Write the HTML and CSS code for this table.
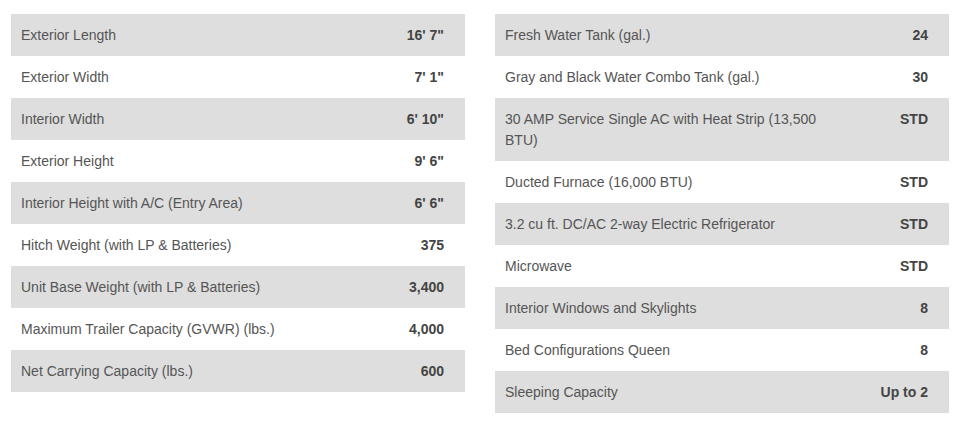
FILE: index.html
```html
<!DOCTYPE html>
<html>
<head>
<meta charset="utf-8">
<link rel="stylesheet" href="styles.css">
</head>
<body>
<div class="wrap">
  <div class="specs">
    <div class="row"><div class="label">Exterior Length</div><div class="value">16' 7"</div></div>
    <div class="row"><div class="label">Exterior Width</div><div class="value">7' 1"</div></div>
    <div class="row"><div class="label">Interior Width</div><div class="value">6' 10"</div></div>
    <div class="row"><div class="label">Exterior Height</div><div class="value">9' 6"</div></div>
    <div class="row"><div class="label">Interior Height with A/C (Entry Area)</div><div class="value">6' 6"</div></div>
    <div class="row"><div class="label">Hitch Weight (with LP &amp; Batteries)</div><div class="value">375</div></div>
    <div class="row"><div class="label">Unit Base Weight (with LP &amp; Batteries)</div><div class="value">3,400</div></div>
    <div class="row"><div class="label">Maximum Trailer Capacity (GVWR) (lbs.)</div><div class="value">4,000</div></div>
    <div class="row"><div class="label">Net Carrying Capacity (lbs.)</div><div class="value">600</div></div>
  </div>
  <div class="specs">
    <div class="row"><div class="label">Fresh Water Tank (gal.)</div><div class="value">24</div></div>
    <div class="row"><div class="label">Gray and Black Water Combo Tank (gal.)</div><div class="value">30</div></div>
    <div class="row"><div class="label">30 AMP Service Single AC with Heat Strip (13,500 BTU)</div><div class="value">STD</div></div>
    <div class="row"><div class="label">Ducted Furnace (16,000 BTU)</div><div class="value">STD</div></div>
    <div class="row"><div class="label">3.2 cu ft. DC/AC 2-way Electric Refrigerator</div><div class="value">STD</div></div>
    <div class="row"><div class="label">Microwave</div><div class="value">STD</div></div>
    <div class="row"><div class="label">Interior Windows and Skylights</div><div class="value">8</div></div>
    <div class="row"><div class="label">Bed Configurations Queen</div><div class="value">8</div></div>
    <div class="row"><div class="label">Sleeping Capacity</div><div class="value">Up to 2</div></div>
  </div>
</div>
</body>
</html>
```

FILE: styles.css
```css
html, body {
  margin: 0;
  padding: 0;
  background: #fff;
}
body {
  font-family: "Liberation Sans", Arial, Helvetica, sans-serif;
  font-size: 14px;
  color: #555;
}
.wrap {
  display: flex;
  align-items: flex-start;
  gap: 30px;
  padding: 14px 11px 0 11px;
}
.specs {
  width: 454px;
  display: flex;
  flex-direction: column;
}
.row {
  display: flex;
  align-items: flex-start;
  line-height: 21px;
  padding: 10.5px 0;
}
.row:nth-child(odd) {
  background: #dedede;
}
.label {
  flex: 1;
  padding: 0 10px;
  color: #555;
}
.value {
  width: 80px;
  flex: none;
  text-align: right;
  padding-right: 21px;
  font-weight: bold;
  color: #444;
}
```
